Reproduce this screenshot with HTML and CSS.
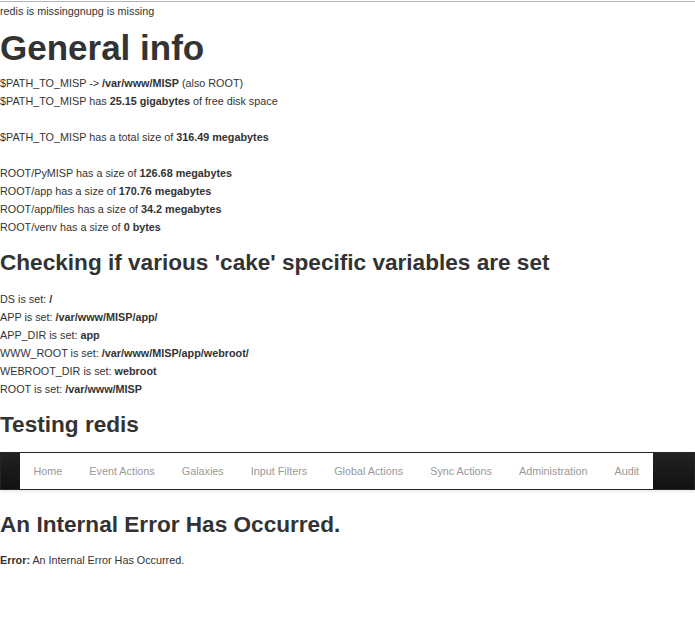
FILE: index.html
```html
<!DOCTYPE html>
<html>
<head>
<meta charset="utf-8">
<title>MISP</title>
<link rel="stylesheet" href="styles.css">
</head>
<body>
<div class="topbar"></div>
<div class="msg">redis is missinggnupg is missing</div>
<h1 class="title">General info</h1>
<div class="lines">
  <div>$PATH_TO_MISP -&gt; <b>/var/www/MISP</b> (also ROOT)</div>
  <div>$PATH_TO_MISP has <b>25.15 gigabytes</b> of free disk space</div>
  <div class="gap"></div>
  <div>$PATH_TO_MISP has a total size of <b>316.49 megabytes</b></div>
  <div class="gap"></div>
  <div>ROOT/PyMISP has a size of <b>126.68 megabytes</b></div>
  <div>ROOT/app has a size of <b>170.76 megabytes</b></div>
  <div>ROOT/app/files has a size of <b>34.2 megabytes</b></div>
  <div>ROOT/venv has a size of <b>0 bytes</b></div>
</div>
<h2 class="section">Checking if various 'cake' specific variables are set</h2>
<div class="lines">
  <div>DS is set: <b>/</b></div>
  <div>APP is set: <b>/var/www/MISP/app/</b></div>
  <div>APP_DIR is set: <b>app</b></div>
  <div>WWW_ROOT is set: <b>/var/www/MISP/app/webroot/</b></div>
  <div>WEBROOT_DIR is set: <b>webroot</b></div>
  <div>ROOT is set: <b>/var/www/MISP</b></div>
</div>
<h3 class="section redis">Testing redis</h3>
<div class="navbar">
  <div class="navbar-inner">
    <ul class="nav">
      <li><a href="#">Home</a></li>
      <li><a href="#">Event Actions</a></li>
      <li><a href="#">Galaxies</a></li>
      <li><a href="#">Input Filters</a></li>
      <li><a href="#">Global Actions</a></li>
      <li><a href="#">Sync Actions</a></li>
      <li><a href="#">Administration</a></li>
      <li><a href="#">Audit</a></li>
    </ul>
  </div>
</div>
<h2 class="section error-title">An Internal Error Has Occurred.</h2>
<p class="error"><b>Error:</b> An Internal Error Has Occurred.</p>
</body>
</html>
```
FILE: styles.css
```css
html, body {
  background: #fff;
}
body {
  margin: 0;
  font-family: "Liberation Sans", Arial, Helvetica, sans-serif;
  font-size: 10.8px;
  line-height: 18px;
  color: #333;
}
.topbar {
  height: 1px;
  margin-top: 1px;
  background: #b4b4b4;
}
.msg {
  line-height: 18px;
}
.title {
  font-size: 35px;
  line-height: 40px;
  font-weight: bold;
  margin: 8px 0 6px;
}
.lines .gap {
  height: 18px;
}
.section {
  font-size: 22.6px;
  line-height: 27px;
  font-weight: bold;
  margin: 13px 0 14px;
}
.navbar {
  margin-bottom: 21px;
}
.navbar-inner {
  display: flex;
  padding-left: 19px;
  background: linear-gradient(to bottom, #222222, #111111);
  border: 1px solid #252525;
  box-shadow: 0 1px 3px rgba(0, 0, 0, 0.12);
}
.nav {
  display: flex;
  margin: 0;
  padding: 0;
  list-style: none;
  background: #fff;
}
.nav a {
  display: block;
  padding: 9px 13.5px;
  line-height: 18px;
  color: #999;
  text-decoration: none;
}
.error-title {
  margin: 0 0 13px;
}
.error {
  margin: 0;
}
```
